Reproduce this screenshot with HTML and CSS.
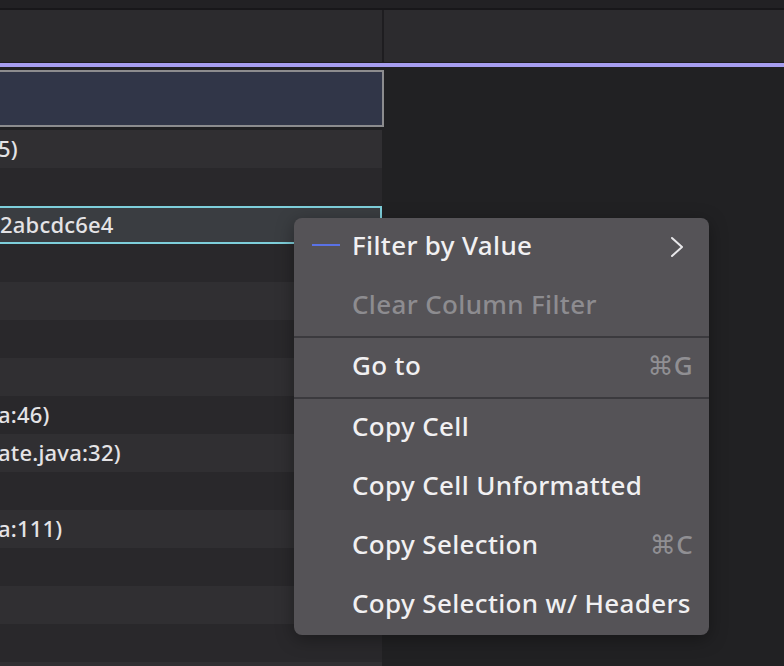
FILE: index.html
```html
<!DOCTYPE html>
<html>
<head>
<meta charset="utf-8">
<link rel="stylesheet" href="styles.css">
</head>
<body>
<div class="topbar"></div>
<div class="header">
  <div class="hcol"></div>
  <div class="hrest"></div>
</div>
<div class="accent"></div>
<div class="table">
  <div class="row first"></div>
  <div class="row light"><span class="cell cut">5)</span></div>
  <div class="row dark"></div>
  <div class="row sel"><span class="cell">2abcdc6e4</span></div>
  <div class="row dark"></div>
  <div class="row light"></div>
  <div class="row dark"></div>
  <div class="row light"></div>
  <div class="row dark"><span class="cell cut">a:46)</span></div>
  <div class="row light"><span class="cell cut">ate.java:32)</span></div>
  <div class="row dark"></div>
  <div class="row light"><span class="cell cut">a:111)</span></div>
  <div class="row dark"></div>
  <div class="row light"></div>
  <div class="row dark"></div>
  <div class="row light last"></div>
</div>

<div class="menu">
  <div class="item">
    <span class="mark"></span>
    <span class="label">Filter by Value</span>
    <svg class="chev" width="14" height="22" viewBox="0 0 14 22"><path d="M2 2 L12 11 L2 20" fill="none" stroke="#e8e7ea" stroke-width="2" stroke-linecap="round" stroke-linejoin="round"/></svg>
  </div>
  <div class="item disabled"><span class="label">Clear Column Filter</span></div>
  <div class="sep"></div>
  <div class="item"><span class="label">Go to</span><span class="key">⌘G</span></div>
  <div class="sep"></div>
  <div class="item"><span class="label">Copy Cell</span></div>
  <div class="item"><span class="label">Copy Cell Unformatted</span></div>
  <div class="item"><span class="label">Copy Selection</span><span class="key">⌘C</span></div>
  <div class="item"><span class="label">Copy Selection w/ Headers</span></div>
</div>
</body>
</html>
```

FILE: styles.css
```css
html, body {
  margin: 0;
  padding: 0;
}
body {
  width: 784px;
  height: 666px;
  overflow: hidden;
  background: #212123;
  font-family: "Noto Sans", "Open Sans", "DejaVu Sans", sans-serif;
  position: relative;
}
.topbar {
  height: 8px;
  background: #222124;
  border-bottom: 2px solid #18171a;
}
.header {
  display: flex;
  height: 52px;
  background: #2c2b2e;
  border-bottom: 1px solid #1e1d20;
}
.hcol {
  width: 382px;
  border-right: 2px solid #1e1d20;
}
.hrest {
  flex: 1;
}
.accent {
  height: 4px;
  background: #a79ef0;
}
.table {
  width: 384px;
  padding-top: 3px;
}
.row {
  width: 382px;
  height: 38px;
  display: flex;
  align-items: center;
  box-sizing: border-box;
  overflow: hidden;
  white-space: nowrap;
  padding-bottom: 3px;
}
.row.last {
  height: 4px;
}
.row.first {
  width: 384px;
  height: 57px;
  background: #313648;
  border: 2px solid #8c8c8e;
  border-left: none;
  margin-bottom: 3px;
}
.row.light { background: #302f32; }
.row.dark { background: #29282b; }
.row.sel {
  background: #3a3d41;
  border: 2px solid #7ecfdb;
  border-left: none;
}
.cell {
  color: #e4e3e6;
  font-size: 22px;
  font-weight: 500;
  letter-spacing: 0.2px;
  line-height: 1;
}
.cell.cut {
  margin-left: -2px;
}
.menu {
  position: absolute;
  left: 294px;
  top: 218px;
  width: 415px;
  background: #555357;
  border-radius: 8px;
  box-shadow: 0 4px 18px rgba(0, 0, 0, 0.35);
  overflow: hidden;
}
.item {
  position: relative;
  height: 59px;
  box-sizing: border-box;
  display: flex;
  align-items: center;
  padding: 0 16px 5px 58px;
  color: #f1f0f2;
  font-size: 26px;
  font-weight: 500;
  letter-spacing: 0.35px;
}
.item .label {
  flex: 1;
  white-space: nowrap;
}
.item.disabled {
  color: #8d8c90;
}
.key {
  color: #908f93;
}
.mark {
  position: absolute;
  left: 18px;
  top: 26px;
  width: 28px;
  height: 2px;
  background: #5a72e6;
}
.chev {
  margin-right: 9px;
  margin-top: 4px;
}
.sep {
  height: 2px;
  background: #3b3a3e;
}
```
